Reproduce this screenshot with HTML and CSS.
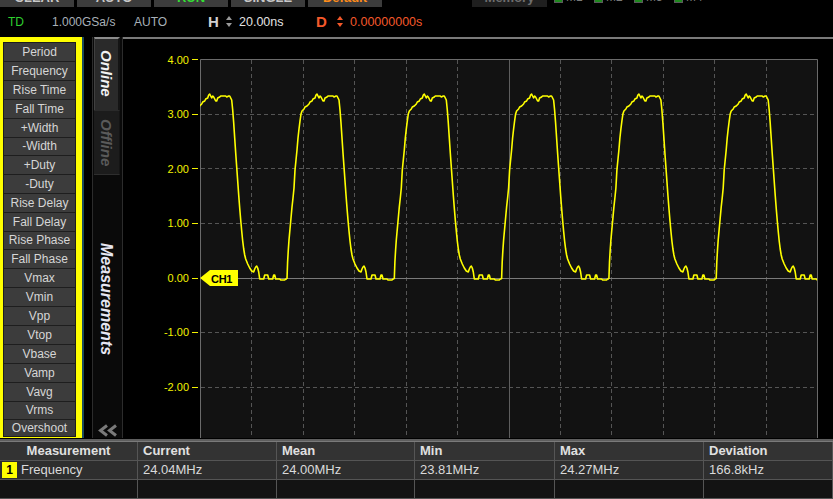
FILE: index.html
```html
<!DOCTYPE html>
<html>
<head>
<meta charset="utf-8">
<title>Measurements</title>
<link rel="stylesheet" href="styles.css">
</head>
<body>
<div class="app">
  <div class="toolbar">
    <div class="tbtn"><span>CLEAR</span></div>
    <div class="tbtn"><span>AUTO</span></div>
    <div class="tbtn run"><span>RUN</span></div>
    <div class="tbtn"><span>SINGLE</span></div>
    <div class="tbtn def"><span>Default</span></div>
    <div class="mem"><span>Memory</span></div>
    <div class="chks">
      <div class="chk"><i></i><span>M1</span></div>
      <div class="chk"><i></i><span>M2</span></div>
      <div class="chk"><i></i><span>M3</span></div>
      <div class="chk"><i></i><span>M4</span></div>
    </div>
  </div>

  <div class="status">
    <span class="td">TD</span>
    <span class="rate">1.000GSa/s</span>
    <span class="mode">AUTO</span>
    <span class="hlbl">H</span>
    <svg class="updown" width="6" height="11" viewBox="0 0 6 11"><polygon points="0,4 3,0 6,4" fill="#9a9a9a"/><polygon points="0,7 3,11 6,7" fill="#9a9a9a"/></svg>
    <span class="hval">20.00ns</span>
    <span class="dlbl">D</span>
    <svg class="updown" width="6" height="11" viewBox="0 0 6 11"><polygon points="0,4 3,0 6,4" fill="#f4582a"/><polygon points="0,7 3,11 6,7" fill="#f4582a"/></svg>
    <span class="dval">0.00000000s</span>
  </div>

  <div class="main">
    <div class="mlist">
      <div class="mbtn">Period</div>
      <div class="mbtn">Frequency</div>
      <div class="mbtn">Rise Time</div>
      <div class="mbtn">Fall Time</div>
      <div class="mbtn">+Width</div>
      <div class="mbtn s">-Width</div>
      <div class="mbtn">+Duty</div>
      <div class="mbtn">-Duty</div>
      <div class="mbtn">Rise Delay</div>
      <div class="mbtn">Fall Delay</div>
      <div class="mbtn s">Rise Phase</div>
      <div class="mbtn">Fall Phase</div>
      <div class="mbtn">Vmax</div>
      <div class="mbtn">Vmin</div>
      <div class="mbtn">Vpp</div>
      <div class="mbtn">Vtop</div>
      <div class="mbtn">Vbase</div>
      <div class="mbtn">Vamp</div>
      <div class="mbtn">Vavg</div>
      <div class="mbtn s">Vrms</div>
      <div class="mbtn s last">Overshoot</div>
    </div>

    <div class="tabs">
      <div class="tab on"><span class="v">Online</span></div>
      <div class="tab off"><span class="v">Offline</span></div>
      <div class="mtitle"><span class="v">Measurements</span></div>
      <svg class="chev" width="22" height="13" viewBox="0 0 22 13">
        <polyline points="10,1.5 3.5,6.5 10,11.5" fill="none" stroke="#7a7a7a" stroke-width="3"/>
        <polyline points="19,1.5 12.5,6.5 19,11.5" fill="none" stroke="#7a7a7a" stroke-width="3"/>
      </svg>
    </div>

    <div class="scope">
      <svg class="plot" width="710" height="399" viewBox="123 39 710 399">
        <defs>
          <clipPath id="clip"><rect x="200" y="59" width="617" height="379"/></clipPath>
          <polyline id="pulse" points="0,279 0.6,262 1.3,250 2,240 3,229 4,218 5,207 6,198 7,188 8,170 9,160 10,150 11,138 12,129 13,121 14,114 15,111 17,109 18,107 20,106 22,104 23,102 25,101 26,99 28,98 29,95 30,94 31,96 32,98 33,96 34,97 35,99 36,101 37,101 38,98 40,97 41,96 44,96 46,96 47,97 49,96 50,96 51,98 52,100 53,110 54,123 55,138 56,153 57,167 58,181 59,195 60,208 61,220 62,231 63,241 64,249 65,255 66,259 68,264 70,268 72,271 74,272 75,269 76,267 77,266 78,268 79,272 80,279 84,279 85,275 88,275 89,279 93,279 94,275 95,275 96,279 100,279 101,280 105,280 106,279 107.3,279"/>
        </defs>
        <rect x="200" y="59" width="618" height="379" fill="#121212"/>
        <g stroke="#555" stroke-width="1" stroke-dasharray="4 3">
          <line x1="251.5" y1="60" x2="251.5" y2="438"/>
          <line x1="303.5" y1="60" x2="303.5" y2="438"/>
          <line x1="354.5" y1="60" x2="354.5" y2="438"/>
          <line x1="406.5" y1="60" x2="406.5" y2="438"/>
          <line x1="457.5" y1="60" x2="457.5" y2="438"/>
          <line x1="560.5" y1="60" x2="560.5" y2="438"/>
          <line x1="611.5" y1="60" x2="611.5" y2="438"/>
          <line x1="663.5" y1="60" x2="663.5" y2="438"/>
          <line x1="714.5" y1="60" x2="714.5" y2="438"/>
          <line x1="766.5" y1="60" x2="766.5" y2="438"/>
          <line x1="201" y1="114.5" x2="817" y2="114.5"/>
          <line x1="201" y1="168.5" x2="817" y2="168.5"/>
          <line x1="201" y1="223.5" x2="817" y2="223.5"/>
          <line x1="201" y1="332.5" x2="817" y2="332.5"/>
          <line x1="201" y1="387.5" x2="817" y2="387.5"/>
        </g>
        <line x1="509.5" y1="60" x2="509.5" y2="438" stroke="#5e5e5e"/>
        <line x1="201" y1="278.5" x2="817" y2="278.5" stroke="#7a7a7a"/>
        <path d="M200.5 438 V59.5 H817.5 V438" fill="none" stroke="#6a6a6a"/>

        <g class="ylab" fill="#f2f200" text-anchor="end">
          <text x="189" y="63.5">4.00</text>
          <text x="189" y="118">3.00</text>
          <text x="189" y="172.5">2.00</text>
          <text x="189" y="227">1.00</text>
          <text x="189" y="282">0.00</text>
          <text x="189" y="336">-1.00</text>
          <text x="189" y="391">-2.00</text>
        </g>
        <g stroke="#f2f200" stroke-width="1">
          <line x1="192" y1="59.5" x2="198" y2="59.5"/>
          <line x1="192" y1="114.5" x2="198" y2="114.5"/>
          <line x1="192" y1="168.5" x2="198" y2="168.5"/>
          <line x1="192" y1="223.5" x2="198" y2="223.5"/>
          <line x1="192" y1="278.5" x2="198" y2="278.5"/>
          <line x1="192" y1="332.5" x2="198" y2="332.5"/>
          <line x1="192" y1="387.5" x2="198" y2="387.5"/>
        </g>

        <g clip-path="url(#clip)" fill="none" stroke="#ffff00" stroke-width="1.6" stroke-linejoin="round">
          <use href="#pulse" x="179.7"/>
          <use href="#pulse" x="287"/>
          <use href="#pulse" x="394.3"/>
          <use href="#pulse" x="501.6"/>
          <use href="#pulse" x="608.9"/>
          <use href="#pulse" x="716.2"/>
        </g>

        <polygon points="200,278 210,270 238,270 238,286 210,286" fill="#ffff00"/>
        <text class="chtag" x="211" y="282.5">CH1</text>
      </svg>
    </div>
  </div>

  <div class="sep"></div>

  <div class="mtable">
    <div class="cell th c1">Measurement</div>
    <div class="cell th">Current</div>
    <div class="cell th">Mean</div>
    <div class="cell th">Min</div>
    <div class="cell th">Max</div>
    <div class="cell th">Deviation</div>

    <div class="cell tdc c1d"><span class="badge">1</span>Frequency</div>
    <div class="cell tdc">24.04MHz</div>
    <div class="cell tdc">24.00MHz</div>
    <div class="cell tdc">23.81MHz</div>
    <div class="cell tdc">24.27MHz</div>
    <div class="cell tdc">166.8kHz</div>

    <div class="cell te"></div>
    <div class="cell te"></div>
    <div class="cell te"></div>
    <div class="cell te"></div>
    <div class="cell te"></div>
    <div class="cell te"></div>
  </div>
</div>
</body>
</html>
```

FILE: styles.css
```css
* { box-sizing: border-box; }
html, body { margin: 0; padding: 0; background: #000; }
body { font-family: "Liberation Sans", Arial, sans-serif; }

.app {
  width: 833px;
  height: 499px;
  overflow: hidden;
  display: flex;
  flex-direction: column;
  background: #000;
}

/* top toolbar (cut off) */
.toolbar { flex: none; height: 7px; display: flex; overflow: hidden; }
.tbtn {
  flex: none;
  width: 74px;
  height: 7px;
  margin-right: 3px;
  background: #3c3c3c;
  overflow: hidden;
  text-align: center;
  color: #c8c8c8;
  font-weight: bold;
  font-size: 13px;
  line-height: 14px;
}
.tbtn span, .mem span { display: block; margin-top: -9px; }
.tbtn.run { color: #33dd33; }
.tbtn.def { color: #ff8c1a; }
.mem {
  flex: none;
  width: 75px;
  height: 7px;
  margin-left: 87px;
  background: #1f1f1f;
  overflow: hidden;
  text-align: center;
  color: #6e6e6e;
  font-weight: bold;
  font-size: 13px;
  line-height: 14px;
}
.chks { display: flex; margin-left: 7px; }
.chk {
  flex: none;
  width: 40px;
  height: 7px;
  display: flex;
  overflow: hidden;
  color: #7a7a7a;
  font-size: 12px;
  line-height: 14px;
}
.chk i {
  flex: none;
  width: 9px;
  height: 9px;
  margin-top: -6px;
  border: 1px solid #5a5a5a;
  background: #0a0a0a;
  box-shadow: inset 2px -2px 0 #1f8a1f;
}
.chk span { display: block; margin-top: -10px; margin-left: 3px; }

/* status row */
.status {
  flex: none;
  height: 30px;
  display: grid;
  grid-template-columns: 44px 82px 74px 18px 13px 77px 21px 13px auto;
  align-items: center;
  padding-left: 8px;
  font-size: 12px;
  color: #a8b0b8;
}
.status .td { color: #2fd12f; }
.status .hlbl { color: #d0d0d0; font-weight: bold; font-size: 15px; margin-top: -2px; }
.status .dlbl { color: #f4582a; font-weight: bold; font-size: 15px; margin-top: -2px; }
.status .hval { color: #e2e2e2; font-size: 12.5px; }
.status .dval { color: #f4582a; font-size: 12.5px; }
.updown { display: block; margin-top: -1px; }

/* main area */
.main { flex: none; height: 401px; display: flex; }

.mlist {
  flex: none;
  width: 84px;
  margin-right: 8px;
  padding: 5px 6px 1px 3px;
  background: #ffff00;
  border-right: 2px solid #1a4a5e;
  display: flex;
  flex-direction: column;
}
.mbtn {
  flex: none;
  height: 19px;
  background: #3c3c3c;
  border: 1px solid #1e1e1e;
  border-bottom: 0;
  color: #d6d6d6;
  font-size: 12px;
  line-height: 18px;
  text-align: center;
  white-space: nowrap;
}
.mbtn.s { height: 18px; line-height: 17px; }
.mbtn.last { border-bottom: 1px solid #1e1e1e; line-height: 16px; }

.tabs {
  flex: none;
  width: 31px;
  border-left: 1px solid #2c2c2c;
  border-right: 1px solid #2c2c2c;
  background: #0a0a0a;
  display: flex;
  flex-direction: column;
}
.v { writing-mode: vertical-rl; white-space: nowrap; }
.tab {
  flex: none;
  width: 26px;
  margin-left: 1px;
  display: flex;
  justify-content: center;
  align-items: center;
  font-weight: bold;
  font-style: italic;
  font-size: 15px;
}
.tab.on {
  height: 73px;
  padding-bottom: 3px;
  background: #2a2a2a;
  border-top: 2px solid #8c8c8c;
  border-left: 1px solid #404040;
  border-right: 2px solid #141414;
  color: #f2f2f2;
}
.tab.off {
  height: 65px;
  background: #1c1c1c;
  border-top: 1px solid #2a2a2a;
  border-bottom: 1px solid #2e2e2e;
  border-right: 1px solid #141414;
  color: #5a5a5a;
}
.mtitle {
  flex: 1;
  display: flex;
  justify-content: center;
  align-items: center;
  padding-right: 3px;
  font-weight: bold;
  font-style: italic;
  font-size: 16px;
  color: #e6e6f2;
}
.chev { display: block; flex: none; margin: 0 0 1px 4px; }

.scope { flex: 1; border-top: 2px solid #7a7a7a; }
.plot { display: block; }
.ylab { font-family: "Liberation Sans", Arial, sans-serif; font-size: 11px; }
.chtag {
  font-family: "Liberation Sans", Arial, sans-serif;
  font-size: 11px;
  font-weight: bold;
  letter-spacing: -0.3px;
  fill: #000;
}

/* separator and table */
.sep { flex: none; height: 3px; border-top: 1px solid #000; background: #5e5e5e; }

.mtable {
  flex: none;
  height: 58px;
  display: grid;
  grid-template-columns: 138px 139px 138px 140px 149px 1fr;
  grid-auto-rows: 19px;
  border-top: 1px solid #7a7a7a;
  font-size: 13px;
  color: #dadada;
}
.cell {
  border-right: 1px solid #555;
  border-bottom: 1px solid #555;
  padding-left: 5px;
  line-height: 18px;
  white-space: nowrap;
  overflow: hidden;
}
.th { background: #333; font-weight: bold; color: #e0e0e0; }
.th.c1 { text-align: center; padding-left: 0; }
.tdc { background: #2e2e2e; }
.c1d { display: flex; align-items: center; padding-left: 2px; }
.badge {
  flex: none;
  width: 15px;
  height: 16px;
  margin-right: 4px;
  background: #ffff00;
  color: #000;
  font-weight: bold;
  font-size: 12px;
  line-height: 16px;
  text-align: center;
}
.te { background: #131313; }
```
